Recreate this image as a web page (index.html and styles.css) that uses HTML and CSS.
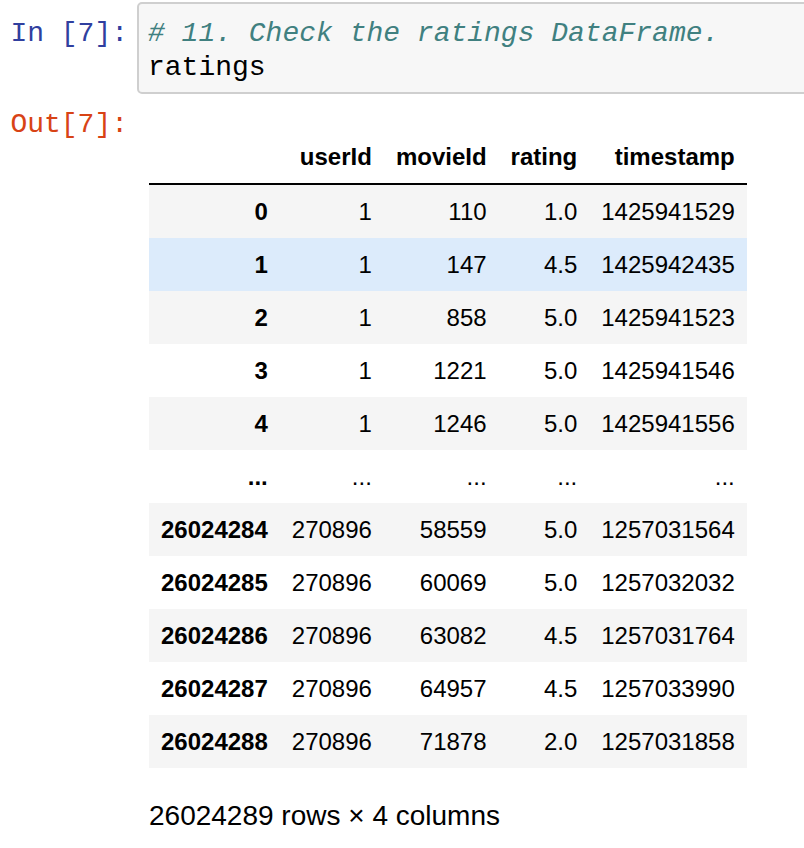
FILE: index.html
```html
<!DOCTYPE html>
<html>
<head>
<meta charset="utf-8">
<link rel="stylesheet" href="styles.css">
</head>
<body>
<div class="cell input-cell">
  <div class="prompt in-prompt">In&nbsp;[7]:</div>
  <div class="input-area">
    <div class="code-line"><span class="comment"># 11. Check the ratings DataFrame.</span></div>
    <div class="code-line">ratings</div>
  </div>
</div>
<div class="cell output-cell">
  <div class="prompt out-prompt">Out[7]:</div>
  <div class="output-area">
    <table class="dataframe">
      <thead>
        <tr><th></th><th>userId</th><th>movieId</th><th>rating</th><th>timestamp</th></tr>
      </thead>
      <tbody>
        <tr><th>0</th><td>1</td><td>110</td><td>1.0</td><td>1425941529</td></tr>
        <tr class="hover"><th>1</th><td>1</td><td>147</td><td>4.5</td><td>1425942435</td></tr>
        <tr><th>2</th><td>1</td><td>858</td><td>5.0</td><td>1425941523</td></tr>
        <tr><th>3</th><td>1</td><td>1221</td><td>5.0</td><td>1425941546</td></tr>
        <tr><th>4</th><td>1</td><td>1246</td><td>5.0</td><td>1425941556</td></tr>
        <tr><th>...</th><td>...</td><td>...</td><td>...</td><td>...</td></tr>
        <tr><th>26024284</th><td>270896</td><td>58559</td><td>5.0</td><td>1257031564</td></tr>
        <tr><th>26024285</th><td>270896</td><td>60069</td><td>5.0</td><td>1257032032</td></tr>
        <tr><th>26024286</th><td>270896</td><td>63082</td><td>4.5</td><td>1257031764</td></tr>
        <tr><th>26024287</th><td>270896</td><td>64957</td><td>4.5</td><td>1257033990</td></tr>
        <tr><th>26024288</th><td>270896</td><td>71878</td><td>2.0</td><td>1257031858</td></tr>
      </tbody>
    </table>
    <p class="shape">26024289 rows × 4 columns</p>
  </div>
</div>
</body>
</html>
```
FILE: styles.css
```css
html, body {
  margin: 0;
  padding: 0;
  background: #ffffff;
  overflow: hidden;
}
body {
  padding-top: 2px;
  font-family: "Liberation Sans", Arial, sans-serif;
  color: #000;
}
.cell {
  display: flex;
  align-items: flex-start;
  gap: 9px;
}
.prompt {
  flex: 0 0 128px;
  width: 128px;
  text-align: right;
  font-family: "Liberation Mono", "Courier New", monospace;
  font-size: 28px;
  line-height: 34px;
  white-space: nowrap;
}
.in-prompt {
  color: #303f9f;
  padding-top: 15px;
}
.out-prompt {
  color: #d84315;
}
.input-area {
  flex: 1;
  margin-right: -20px;
  background: #f7f7f7;
  border: 2px solid #cfcfcf;
  border-radius: 5px;
  padding: 13px 9px 7px 9px;
  font-family: "Liberation Mono", "Courier New", monospace;
  font-size: 28px;
  line-height: 34px;
}
.code-line {
  white-space: pre;
  height: 34px;
}
.comment {
  color: #408080;
  font-style: italic;
}
.output-cell {
  margin-top: 14px;
}
.output-area {
  flex: 1;
  padding-left: 12px;
}
.dataframe {
  margin-top: 22px;
  border-collapse: collapse;
  border-spacing: 0;
  font-size: 24px;
}
.dataframe th,
.dataframe td {
  padding: 12px;
  line-height: 29px;
  text-align: right;
  vertical-align: middle;
  white-space: nowrap;
}
.dataframe th {
  font-weight: bold;
}
.dataframe thead tr {
  border-bottom: 2px solid #000;
}
.dataframe tbody tr:nth-child(odd) {
  background: #f5f5f5;
}
.dataframe tbody tr.hover {
  background: #dcebfb;
}
.shape {
  margin: 32px 0 0 0;
  font-size: 28px;
  line-height: 32px;
}
```
